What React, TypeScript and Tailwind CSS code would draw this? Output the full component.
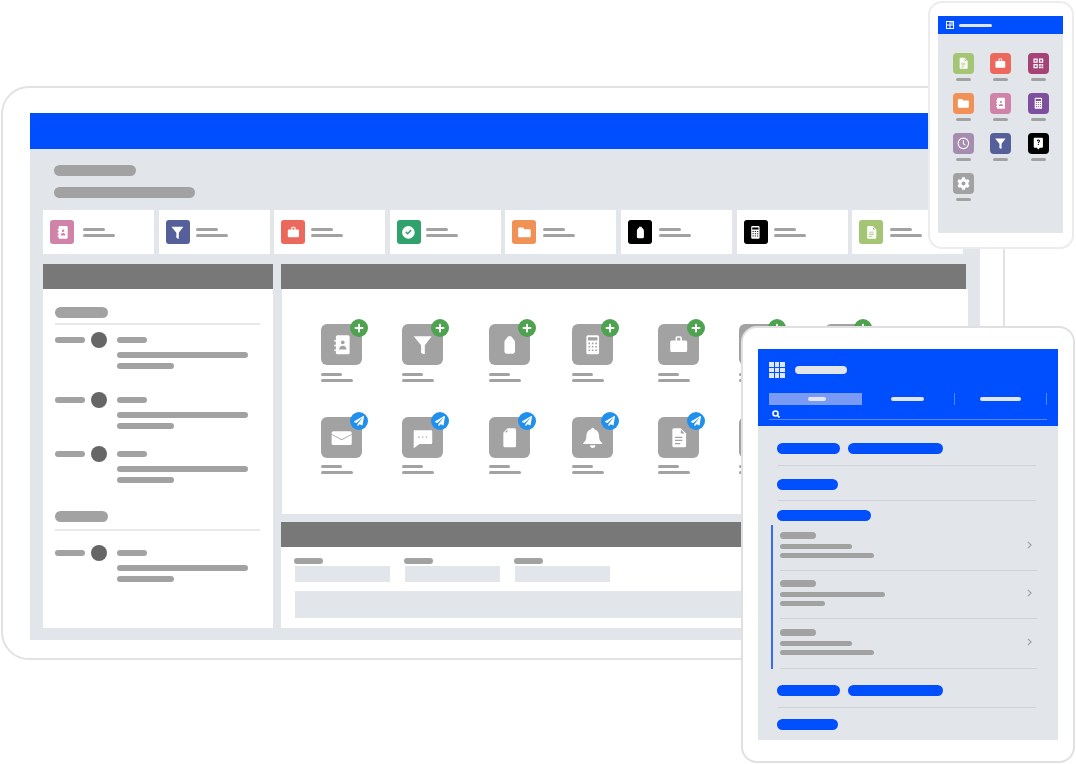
import React from 'react';
import { FaCog, FaPaperPlane, FaPlus } from 'react-icons/fa';

type IconName = 'book' | 'filter' | 'bottle' | 'calc' | 'case' | 'mail' | 'chat' | 'clip' | 'bell' | 'doc' | 'folder' | 'check' | 'qr' | 'clock' | 'help';

const paths: Record<IconName, string> = {
  book: 'M8 3h10a1.5 1.5 0 0 1 1.5 1.5v15A1.5 1.5 0 0 1 18 21H8a1.5 1.5 0 0 1-1.5-1.5V18H5v-1.5h1.5v-3H5V12h1.5V9H5V7.5h1.5v-3A1.5 1.5 0 0 1 8 3Z M13 8a1.8 1.8 0 1 0 0 3.6A1.8 1.8 0 0 0 13 8Z M9.5 16.5c0-2.2 1.5-3.6 3.5-3.6s3.5 1.4 3.5 3.6Z',
  filter: 'M3.5 4h17L14 12.5v8.2l-1 .3-2.5-1.2v-7.3Z',
  bottle: 'M10.5 4h3c.6 1.8 3.5 3 3.5 6v8.5a2 2 0 0 1-2 2H9a2 2 0 0 1-2-2V10c0-3 2.9-4.2 3.5-6Z',
  calc: 'M7.5 3h9A1.5 1.5 0 0 1 18 4.5v15a1.5 1.5 0 0 1-1.5 1.5h-9A1.5 1.5 0 0 1 6 19.5v-15A1.5 1.5 0 0 1 7.5 3Z M7.5 5v3h9V5Z M8 10v1.5h1.5V10Z M11.2 10v1.5h1.5V10Z M14.5 10v1.5H16V10Z M8 13.2v1.5h1.5v-1.5Z M11.2 13.2v1.5h1.5v-1.5Z M14.5 13.2v1.5H16v-1.5Z M8 16.5V18h1.5v-1.5Z M11.2 16.5V18h1.5v-1.5Z M14.5 16.5V18H16v-1.5Z',
  case: 'M9 8V5.5A1.5 1.5 0 0 1 10.5 4h3A1.5 1.5 0 0 1 15 5.5V8h3.5A1.5 1.5 0 0 1 20 9.5v8a1.5 1.5 0 0 1-1.5 1.5h-13A1.5 1.5 0 0 1 4 17.5v-8A1.5 1.5 0 0 1 5.5 8Z M10.5 5.5V8h3V5.5Z',
  mail: 'M4 6h16a1.5 1.5 0 0 1 1.5 1.5v10A1.5 1.5 0 0 1 20 19H4a1.5 1.5 0 0 1-1.5-1.5v-10A1.5 1.5 0 0 1 4 6Z M2.5 8.5l9.5 5 9.5-5v.8l-9.5 5-9.5-5Z',
  chat: 'M4 5h16a1 1 0 0 1 1 1v11a1 1 0 0 1-1 1H9l-5.5 4V5.5A.5.5 0 0 1 4 5Z M7.8 10.8V12H9v-1.2Z M11.4 10.8V12h1.2v-1.2Z M15 10.8V12h1.2v-1.2Z',
  clip: 'M10 3h6.5A1.5 1.5 0 0 1 18 4.5v15a1.5 1.5 0 0 1-1.5 1.5h-9A1.5 1.5 0 0 1 6 19.5V7Z M9.8 4.5 7.5 6.8h2.3Z',
  bell: 'M12 2.5a1.5 1.5 0 0 1 1.5 1.6C16.5 4.8 18 7.5 18 10.5c0 3.5 1 5 3 6.5v1H3v-1c2-1.5 3-3 3-6.5 0-3 1.5-5.7 4.5-6.4A1.5 1.5 0 0 1 12 2.5Z M9.5 19.2h5a2.5 2.5 0 0 1-5 0Z',
  doc: 'M7.5 3H14l5 5v11.5a1.5 1.5 0 0 1-1.5 1.5h-10A1.5 1.5 0 0 1 6 19.5v-15A1.5 1.5 0 0 1 7.5 3Z M14 4.5V8h3.5Z M8.5 11v1.2h7V11Z M8.5 14v1.2h7V14Z M8.5 17v1.2h5V17Z',
  folder: 'M3 6.5A1.5 1.5 0 0 1 4.5 5H10l2 2.5h7.5A1.5 1.5 0 0 1 21 9v8.5a1.5 1.5 0 0 1-1.5 1.5h-15A1.5 1.5 0 0 1 3 17.5Z',
  check: 'M12 3a9 9 0 1 0 0 18 9 9 0 0 0 0-18Z M7.5 12 9 10.5l2 2 4-4.5 1.5 1.5-5.5 6Z',
  qr: 'M4 4h7v7H4Z M6 6v3h3V6Z M13 4h7v7h-7Z M15 6v3h3V6Z M4 13h7v7H4Z M6 15v3h3v-3Z M13 13h3v3h-3Z M17 13h3v3h-3Z M13 17h3v3h-3Z M17 17h3v3h-3Z',
  clock: 'M12 2.5a9.5 9.5 0 1 0 0 19 9.5 9.5 0 0 0 0-19Z M12 4.3a7.7 7.7 0 1 1 0 15.4 7.7 7.7 0 0 1 0-15.4Z M11.2 7h1.6v5.3l3 1.8-.8 1.300-3.800-2.300Z',
  help: 'M6 3h12a1.5 1.5 0 0 1 1.5 1.5v13A1.5 1.5 0 0 1 18 19h-3.5L12 22l-2.5-3H6a1.5 1.5 0 0 1-1.5-1.5v-13A1.5 1.5 0 0 1 6 3Z M9.5 8.5c0-1.600 1.100-2.700 2.600-2.700s2.500 1 2.500 2.300c0 1.800-1.800 2-1.800 3.600h-1.600c0-2.200 1.800-2.500 1.800-3.600 0-.5-.4-.9-.9-.9-.6 0-1 .5-1 1.300Z M11.200 13v1.700h1.600V13Z',
};

const Glyph = ({ name, small }: { name: IconName; small?: boolean }) => (
  <svg viewBox="0 0 24 24" className={small ? 'h-[70%] w-[70%] text-white' : 'h-[62%] w-[62%] text-white'} fill="currentColor">
    <path d={paths[name]} fillRule="evenodd" />
  </svg>
);

const Bar = ({ className }: { className: string }) => <div className={`rounded-full bg-[#a2a2a2] ${className}`} />;

const cards: { icon: IconName; bg: string; ml: string }[] = [
  { icon: 'book', bg: 'bg-[#d082a8]', ml: 'ml-[9px]' },
  { icon: 'filter', bg: 'bg-[#55609b]', ml: 'ml-[6px]' },
  { icon: 'case', bg: 'bg-[#ec675c]', ml: 'ml-[6px]' },
  { icon: 'check', bg: 'bg-[#2fa36b]', ml: 'ml-[5px]' },
  { icon: 'folder', bg: 'bg-[#f09155]', ml: 'ml-[7px]' },
  { icon: 'bottle', bg: 'bg-black', ml: 'ml-[7px]' },
  { icon: 'calc', bg: 'bg-black', ml: 'ml-[6px]' },
  { icon: 'doc', bg: 'bg-[#a3c574]', ml: 'ml-[7px]' },
];

const Card = ({ icon, bg, ml }: { icon: IconName; bg: string; ml: string }) => (
  <div className="flex h-[44px] w-[111px] shrink-0 items-center bg-white pl-[7px]">
    <div className={`flex h-[24px] w-[24px] items-center justify-center rounded-[3px] ${bg}`}>
      <Glyph name={icon} small />
    </div>
    <div className={ml}>
      <Bar className="h-[3px] w-[22px]" />
      <Bar className="mt-[3px] h-[3px] w-[32px]" />
    </div>
  </div>
);

const Tile = ({ icon, cell, badge }: { icon: IconName; cell: string; badge: 'add' | 'send' }) => (
  <div className={`shrink-0 ${cell}`}>
    <div className="relative flex h-[41px] w-[41px] items-center justify-center rounded-[6px] bg-[#a2a2a2]">
      <Glyph name={icon} />
      {badge === 'add' ? (
        <div className="absolute right-[-6px] top-[-5px] flex h-[18px] w-[18px] items-center justify-center rounded-full bg-[#4fa24f] text-white">
          <FaPlus size={10} />
        </div>
      ) : (
        <div className="absolute right-[-6px] top-[-5px] flex h-[18px] w-[18px] items-center justify-center rounded-full bg-[#2090ec] text-white">
          <FaPaperPlane size={10} />
        </div>
      )}
    </div>
    <Bar className={`${badge === 'add' ? 'mt-[8px]' : 'mt-[7px]'} h-[3px] w-[21px]`} />
    <Bar className="mt-[3px] h-[3px] w-[32px]" />
  </div>
);

const topTiles: { icon: IconName; cell: string }[] = [
  { icon: 'book', cell: 'w-[81px]' },
  { icon: 'filter', cell: 'w-[87px]' },
  { icon: 'bottle', cell: 'w-[83px]' },
  { icon: 'calc', cell: 'w-[86px]' },
  { icon: 'case', cell: 'w-[81px]' },
  { icon: 'book', cell: 'w-[86px]' },
  { icon: 'book', cell: 'w-[81px]' },
];

const bottomTiles: { icon: IconName; cell: string }[] = [
  { icon: 'mail', cell: 'w-[81px]' },
  { icon: 'chat', cell: 'w-[87px]' },
  { icon: 'clip', cell: 'w-[83px]' },
  { icon: 'bell', cell: 'w-[86px]' },
  { icon: 'doc', cell: 'w-[81px]' },
  { icon: 'doc', cell: 'w-[86px]' },
];

const Event = ({ className }: { className: string }) => (
  <div className={`flex ${className}`}>
    <Bar className="mt-[5px] h-[6px] w-[30px]" />
    <div className="ml-[6px] h-[16px] w-[16px] rounded-full bg-[#666666]" />
    <div className="ml-[10px]">
      <Bar className="mt-[5px] h-[6px] w-[30px]" />
      <Bar className="mt-[9px] h-[6px] w-[131px]" />
      <Bar className="mt-[5px] h-[6px] w-[57px]" />
    </div>
  </div>
);

const Desktop = () => (
  <div className="absolute left-[1px] top-[86px] h-[574px] w-[1004px] rounded-[28px] border-2 border-[#e2e2e2] bg-white pl-[27px] pt-[25px]">
    <div className="h-[527px] w-[950px] bg-[#e2e5ea]">
      <div className="h-[36px] bg-[#004fff]" />
      <div className="pl-[24px] pt-[16px]">
        <Bar className="h-[11px] w-[82px]" />
        <Bar className="mt-[11px] h-[11px] w-[141px]" />
      </div>
      <div className="ml-[13px] mt-[12px] flex gap-[4.6px]">
        {cards.map((c, i) => (
          <Card key={i} icon={c.icon} bg={c.bg} ml={c.ml} />
        ))}
      </div>
      <div className="ml-[13px] mt-[10px] flex gap-[8px]">
        <div className="h-[364px] w-[230px] bg-white">
          <div className="h-[25px] bg-[#787878]" />
          <div className="px-[12px] pt-[18px]">
            <Bar className="h-[11px] w-[53px]" />
            <div className="mt-[5px] h-[2px] w-[205px] bg-[#e9e9e9]" />
            <Event className="mt-[7px]" />
            <Event className="mt-[23px]" />
            <Event className="mt-[17px]" />
            <Bar className="mt-[28px] h-[11px] w-[53px]" />
            <div className="mt-[7px] h-[2px] w-[205px] bg-[#e9e9e9]" />
            <Event className="mt-[14px]" />
          </div>
        </div>
        <div className="w-[687px]">
          <div className="h-[25px] w-[685px] bg-[#787878]" />
          <div className="ml-[1px] h-[225px] bg-white pl-[39px] pt-[35px]">
            <div className="flex">
              {topTiles.map((t, i) => (
                <Tile key={i} icon={t.icon} cell={t.cell} badge="add" />
              ))}
            </div>
            <div className="mt-[35px] flex">
              {bottomTiles.map((t, i) => (
                <Tile key={i} icon={t.icon} cell={t.cell} badge="send" />
              ))}
            </div>
          </div>
          <div className="mt-[8px] h-[106px] bg-white">
            <div className="h-[25px] bg-[#787878]" />
            <div className="flex gap-[14px] pl-[13px] pt-[11px]">
              {[0, 1, 2].map((i) => (
                <div key={i}>
                  <Bar className="h-[6px] w-[29px]" />
                  <div className="ml-[1px] mt-[2px] h-[16px] w-[95px] bg-[#e2e5ea]" />
                </div>
              ))}
            </div>
            <div className="ml-[14px] mt-[9px] h-[27px] w-[660px] bg-[#e2e5ea]" />
          </div>
        </div>
      </div>
    </div>
  </div>
);

const phoneTiles: { icon: IconName | 'cog'; bg: string }[] = [
  { icon: 'doc', bg: 'bg-[#a3c574]' },
  { icon: 'case', bg: 'bg-[#ec675c]' },
  { icon: 'qr', bg: 'bg-[#a54276]' },
  { icon: 'folder', bg: 'bg-[#f09155]' },
  { icon: 'book', bg: 'bg-[#d082a8]' },
  { icon: 'calc', bg: 'bg-[#7d4f9e]' },
  { icon: 'clock', bg: 'bg-[#a68cae]' },
  { icon: 'filter', bg: 'bg-[#55609b]' },
  { icon: 'help', bg: 'bg-black' },
  { icon: 'cog', bg: 'bg-[#a2a2a2]' },
];

const Phone = () => (
  <div className="absolute left-[928px] top-[1px] h-[248px] w-[146px] rounded-[14px] border-2 border-[#ececec] bg-white pl-[8px] pt-[13px]">
    <div className="h-[217px] w-[125px] bg-[#e2e5ea]">
      <div className="flex h-[18px] items-center bg-[#004fff] pl-[8px]">
        <svg viewBox="0 0 8 8" className="h-[8px] w-[8px]" fill="none" stroke="white" strokeWidth="1">
          <rect x="0.5" y="0.5" width="7" height="7" />
          <path d="M4 0.5V7.5M0.5 4H7.5M5 2H7" />
        </svg>
        <Bar className="ml-[5px] h-[3px] w-[33px] !bg-[#e2e5ea]" />
      </div>
      <div className="grid grid-cols-[37px_38px_21px] gap-y-[12px] pl-[15px] pt-[19px]">
        {phoneTiles.map((t, i) => (
          <div key={i}>
            <div className={`flex h-[21px] w-[21px] items-center justify-center rounded-[4px] ${t.bg}`}>
              {t.icon === 'cog' ? <FaCog size={13} className="text-white" /> : <Glyph name={t.icon} small />}
            </div>
            <Bar className="ml-[3px] mt-[4px] h-[3px] w-[15px]" />
          </div>
        ))}
      </div>
    </div>
  </div>
);

const Blue = ({ className }: { className: string }) => <div className={`h-[11px] rounded-full bg-[#004fff] ${className}`} />;

const Rule = ({ className }: { className: string }) => <div className={`h-px bg-[#cfd2d6] ${className}`} />;

const Chevron = () => (
  <svg viewBox="0 0 6 10" className="h-[8px] w-[5px]" fill="none" stroke="#a2a2a2" strokeWidth="1.5">
    <path d="M1 1l4 4-4 4" />
  </svg>
);

const items = [
  { a: 'w-[72px]', b: 'w-[94px]', gap: 'pt-[7px]', h: 'h-[46px]' },
  { a: 'w-[105px]', b: 'w-[45px]', gap: 'pt-[9px]', h: 'h-[48px]' },
  { a: 'w-[72px]', b: 'w-[94px]', gap: 'pt-[10px]', h: 'h-[50px]' },
];

const Tablet = () => (
  <div className="absolute left-[741px] top-[326px] h-[437px] w-[334px] rounded-[16px] border-2 border-[#e0e0e0] bg-white pl-[15px] pt-[21px]">
    <div className="h-[391px] w-[300px] bg-[#e2e5ea]">
      <div className="h-[77px] bg-[#004fff] px-[11px] pt-[13px]">
        <div className="flex items-center">
          <div className="grid h-[16px] w-[16px] grid-cols-3 gap-[1px]">
            {[0, 1, 2, 3, 4, 5, 6, 7, 8].map((i) => (
              <div key={i} className="bg-[#dfe6fb]" />
            ))}
          </div>
          <Bar className="ml-[10px] h-[8px] w-[52px] !bg-[#e2e5ea]" />
        </div>
        <div className="mt-[15px] flex h-[12px] w-[278px] items-center">
          <div className="flex h-[12px] w-[93px] items-center justify-center bg-[#7a9bf5] pl-[3px]">
            <Bar className="h-[4px] w-[18px] !bg-[#e2e5ea]" />
          </div>
          <div className="flex h-[12px] w-[93px] items-center justify-center border-r border-[#5a85ff] pr-[1px]">
            <Bar className="h-[4px] w-[33px] !bg-[#e2e5ea]" />
          </div>
          <div className="flex h-[12px] w-[92px] items-center justify-center border-r border-[#5a85ff]">
            <Bar className="h-[4px] w-[41px] !bg-[#e2e5ea]" />
          </div>
        </div>
        <div className="h-[15px] w-[278px] border-b border-[#5a85ff] pl-[3px] pt-[5px]">
          <svg viewBox="0 0 8 8" className="h-[8px] w-[8px]" fill="none" stroke="white" strokeWidth="1.6">
            <circle cx="3.5" cy="3.5" r="2.5" />
            <path d="M5.5 5.5L7.5 7.5" />
          </svg>
        </div>
      </div>
      <div className="pl-[19px] pt-[17px]">
        <div className="flex gap-[8px]">
          <Blue className="w-[63px]" />
          <Blue className="w-[95px]" />
        </div>
        <Rule className="ml-[1px] mt-[11px] w-[258px]" />
        <Blue className="mt-[13px] w-[61px]" />
        <Rule className="ml-[1px] mt-[10px] w-[258px]" />
        <Blue className="mt-[9px] w-[94px]" />
      </div>
      <div className="ml-[13px] mt-[4px] h-[144px] w-[266px] border-l-2 border-[#3a6cf0] pl-[7px]">
        {items.map((it, i) => (
          <div key={i} className={`flex justify-between border-b border-[#cfd2d6] pr-[5px] ${it.gap} ${it.h}`}>
            <div>
              <Bar className="h-[7px] w-[36px]" />
              <Bar className={`mt-[5px] h-[5px] ${it.a}`} />
              <Bar className={`mt-[4px] h-[5px] ${it.b}`} />
            </div>
            <div className="pt-[9px]">
              <Chevron />
            </div>
          </div>
        ))}
      </div>
      <div className="pl-[19px] pt-[16px]">
        <div className="flex gap-[8px]">
          <Blue className="w-[63px]" />
          <Blue className="w-[95px]" />
        </div>
        <Rule className="ml-[1px] mt-[11px] w-[258px]" />
        <Blue className="mt-[11px] w-[61px]" />
      </div>
    </div>
  </div>
);

export default function App() {
  return (
    <div className="relative h-[764px] w-[1076px] overflow-hidden bg-white">
      <Desktop />
      <Phone />
      <Tablet />
    </div>
  );
}
